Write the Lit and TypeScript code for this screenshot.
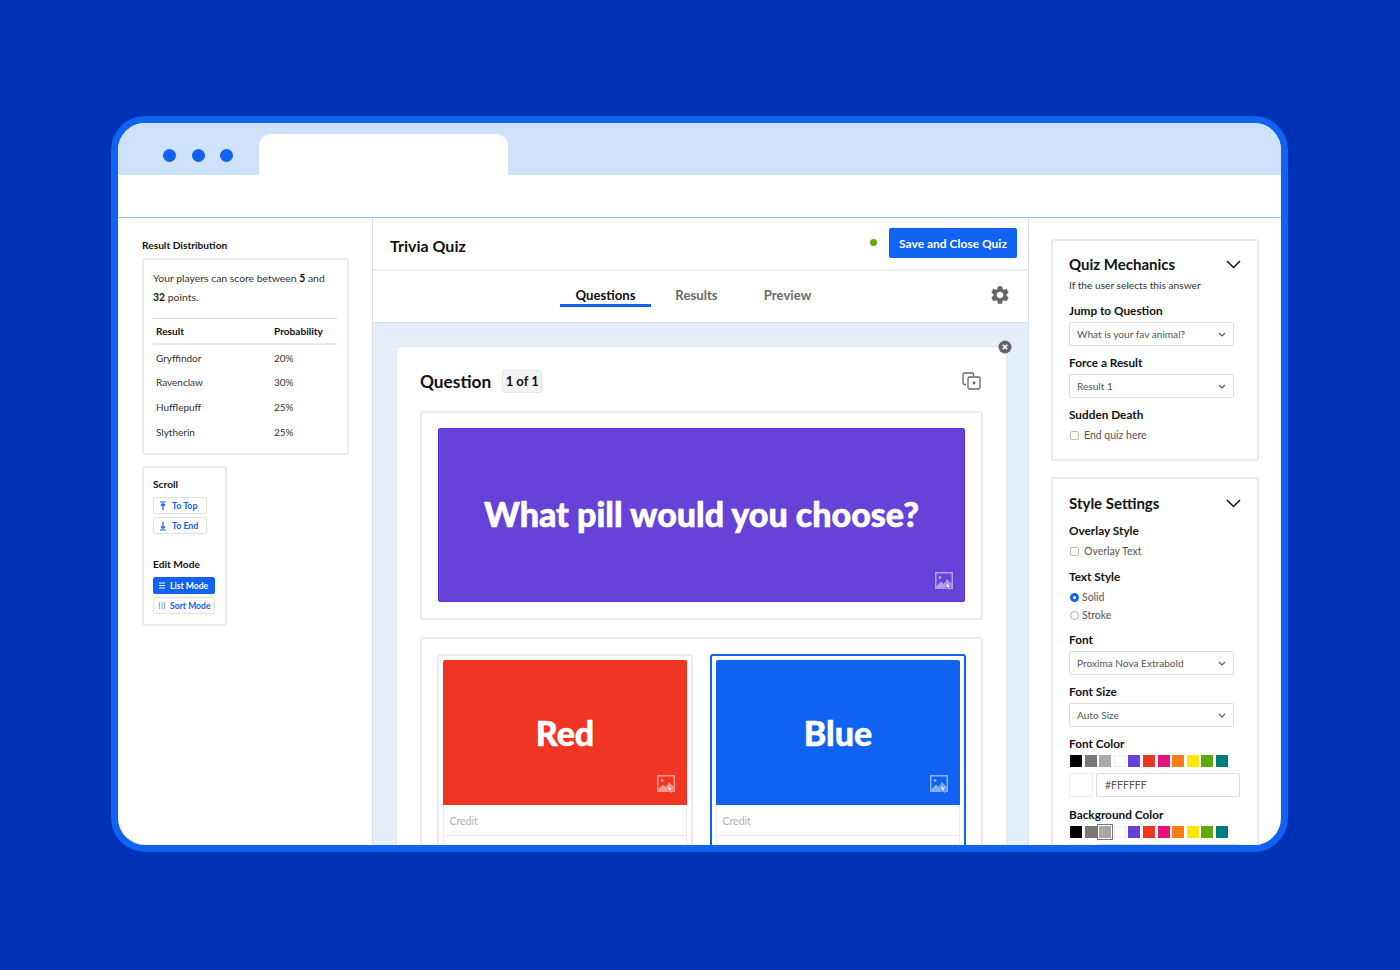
import { LitElement, html, css, svg } from "lit";
import { customElement } from "lit/decorators.js";

const COLORS = ["#000000", "#777777", "#a8a8a8", "#ffffff", "#6642d8", "#f03522", "#e5127e", "#f97d16", "#ffe600", "#5fa80e", "#007c7c"];
const ROWS = [
  ["Gryffindor", "20%"],
  ["Ravenclaw", "30%"],
  ["Hufflepuff", "25%"],
  ["Slytherin", "25%"],
];

const chevron = svg`<path d="M1 1l6.5 6.5L14 1" fill="none" stroke="#111" stroke-width="1.5"/>`;
const smallChevron = svg`<path d="M1 1l3 3 3-3" fill="none" stroke="#555" stroke-width="1.1"/>`;

const imageIcon = (bg: string) => html`<svg class="img-icon" viewBox="0 0 18 18" width="18" height="18">
  <g opacity="0.5">
    <rect x=".75" y=".75" width="16.5" height="15.5" fill="none" stroke="#fff" stroke-width="1.5"/>
    <circle cx="5" cy="5.5" r="1.4" fill="#fff"/>
    <path d="M1.5 14l4.5-4.5 2.5 2.5 3.5-5 4.5 5v4H1.5z" fill="#fff"/>
  </g>
  <path d="M11 9.5l5 5.5h-2l1.5 3H14l-1.500-3-1.500 1.500z" fill="#fff" fill-opacity=".75" stroke="${bg}" stroke-width=".6"/>
</svg>`;

@customElement("app-root")
class AppRoot extends LitElement {
  static styles = css`
    :host {
      display: block;
      height: 970px;
      overflow: hidden;
      background: #0032b6;
      font-family: Lato, "Liberation Sans", sans-serif;
      color: #111;
      --blue: #1062f0;
      --line: #ebebeb;
    }
    * {
      box-sizing: border-box;
    }
    .window {
      position: relative;
      margin: 116px 0 0 111px;
      width: 1177px;
      height: 736px;
      border: 7px solid var(--blue);
      border-radius: 34px;
      background: #fff;
      overflow: hidden;
    }
    .titlebar {
      height: 52px;
      background: #cfe2fc;
      display: flex;
      align-items: flex-end;
      padding-left: 45px;
    }
    .dots {
      display: flex;
      gap: 15.5px;
      margin: 0 26px 13px 0;
    }
    .dots i {
      width: 13px;
      height: 13px;
      border-radius: 50%;
      background: var(--blue);
    }
    .tab {
      width: 249px;
      height: 41px;
      background: #fff;
      border-radius: 12px 12px 0 0;
    }
    .urlbar {
      height: 43px;
      border-bottom: 1px solid #9dbdf0;
    }
    .body {
      display: grid;
      grid-template-columns: 255px 656px 252px;
      height: 627px;
      overflow: hidden;
    }

    /* left column */
    .left {
      border-right: 1px solid #dedede;
      padding: 21px 0 0 24px;
    }
    .card {
      border: 2px solid var(--line);
      border-radius: 3px;
      background: #fff;
    }
    .h-small {
      font-size: 10.2px;
      font-weight: 700;
      line-height: 13px;
    }
    .dist {
      width: 207px;
      height: 197px;
      margin-top: 6px;
      padding: 9px 10px 0 9px;
    }
    .dist p {
      margin: 0;
      font-size: 10.4px;
      line-height: 19px;
      color: #333;
    }
    .dist b {
      color: #111;
    }
    table {
      width: 100%;
      margin-top: 11px;
      border-collapse: collapse;
      font-size: 10px;
      color: #333;
    }
    th {
      text-align: left;
      font-size: 10.1px;
      font-weight: 700;
      color: #111;
      height: 25px;
      border-top: 1px solid #d8d8d8;
      border-bottom: 2px solid var(--line);
    }
    td {
      height: 25px;
      padding-top: 3px;
    }
    th:first-child,
    td:first-child {
      width: 120px;
      padding-left: 3px;
    }
    .tools {
      width: 85px;
      height: 160px;
      margin-top: 11px;
      padding: 10px 0 0 9px;
    }
    .tools .h-small + .btn {
      margin-top: 6px;
    }
    .btn {
      display: flex;
      align-items: center;
      width: 54px;
      height: 17px;
      margin-bottom: 3px;
      border: 1px solid #e2e2e2;
      border-radius: 2px;
      color: var(--blue);
      font-size: 8.8px;
      font-weight: 700;
      gap: 5px;
      padding-left: 5px;
    }
    .btn.wide {
      width: 62px;
      gap: 4px;
      padding-left: 4px;
      font-size: 8.6px;
      white-space: nowrap;
    }
    .btn.active {
      background: var(--blue);
      border-color: var(--blue);
      color: #fff;
    }
    .tools .mode {
      margin-top: 24px;
    }

    /* center column */
    .center {
      border-right: 1px solid #dedede;
      display: flex;
      flex-direction: column;
      min-width: 0;
    }
    .head {
      height: 53px;
      flex: none;
      display: flex;
      align-items: center;
      padding: 0 11px 3px 17px;
      border-bottom: 2px solid #eeeeee;
    }
    .head h1 {
      flex: 1;
      margin: 7px 0 0;
      font-size: 16px;
      font-weight: 700;
    }
    .status {
      width: 7px;
      height: 7px;
      border-radius: 50%;
      background: #5fa80e;
      margin: 0 12px 0 0;
    }
    .save {
      width: 128px;
      height: 30px;
      border: none;
      border-radius: 2px;
      background: var(--blue);
      color: #fff;
      font: 700 12px Lato, "Liberation Sans", sans-serif;
      padding: 0;
      margin-top: 2px;
    }
    .tabs {
      height: 52px;
      flex: none;
      display: flex;
      align-items: center;
      padding: 0 0 5px 187px;
      border-bottom: 1px solid #dddddd;
      font-size: 13.2px;
      font-weight: 700;
      color: #6a6a6a;
    }
    .tabs span {
      display: flex;
      align-items: center;
      justify-content: center;
      height: 26px;
      width: 91px;
      padding-top: 2px;
    }
    .tabs .on {
      color: #111;
      border-bottom: 3px solid var(--blue);
      padding-top: 4px;
    }
    .gear {
      margin-left: auto;
      margin-right: 17px;
      margin-top: 2px;
    }
    .canvas {
      flex: 1;
      min-height: 0;
      background: #e5effb;
      padding: 23px 22px 0 24px;
      overflow: hidden;
    }
    .question {
      position: relative;
      background: #fff;
      height: 600px;
      border-top: 1px solid #dfe3ea;
      border-radius: 2px 2px 0 0;
      padding: 0 23px;
      box-shadow: 1px 0 0 #e3e6ea, -1px 0 0 #e3e6ea;
    }
    .close {
      position: absolute;
      top: -7px;
      right: -6px;
    }
    .q-head {
      display: flex;
      align-items: center;
      height: 64px;
      padding-top: 4px;
      gap: 11px;
    }
    .q-head h2 {
      margin: 0;
      font-size: 17.3px;
      font-weight: 700;
    }
    .badge {
      width: 40px;
      height: 23px;
      display: flex;
      align-items: center;
      justify-content: center;
      background: #f3f3f3;
      border: 1px solid #e3e3e3;
      border-radius: 3px;
      font-size: 13px;
      font-weight: 700;
    }
    .copy {
      margin-left: auto;
      margin-right: 2px;
    }
    .panel {
      border: 2px solid var(--line);
      border-radius: 3px;
      padding: 15px 16px 16px;
    }
    .hero {
      position: relative;
      height: 174px;
      background: #6642d8;
      border: 1px solid #5a30e0;
      border-radius: 2px;
      color: #fff;
      display: flex;
      align-items: center;
      justify-content: center;
      padding-bottom: 4px;
      font-size: 34px;
      font-weight: 900;
      -webkit-text-stroke: 0.6px #fff;
    }
    .img-icon {
      position: absolute;
      right: 11px;
      bottom: 11px;
    }
    .answers {
      margin-top: 17px;
      padding: 15px;
      display: grid;
      grid-template-columns: 256px 256px;
      gap: 17px;
      height: 300px;
    }
    .answer {
      border: 2px solid var(--line);
      border-radius: 3px;
      padding: 4px 4px 0;
      height: 260px;
    }
    .answer.sel {
      border-color: var(--blue);
    }
    .tile {
      position: relative;
      height: 145px;
      color: #fff;
      display: flex;
      align-items: center;
      justify-content: center;
      font-size: 34px;
      font-weight: 900;
      border-radius: 2px 2px 0 0;
      -webkit-text-stroke: 0.5px #fff;
    }
    .tile .img-icon {
      right: 12px;
      bottom: 12px;
    }
    .credit {
      height: 31px;
      border: 1px solid var(--line);
      border-top: none;
      color: #b0b0b0;
      font-size: 10.5px;
      padding: 10px 0 0 5.5px;
    }
    .rest {
      height: 40px;
      border: 1px solid var(--line);
      border-top: none;
    }

    /* right column */
    .right {
      padding: 21px 0 0 22px;
    }
    .box {
      width: 208px;
      padding: 0 0 0 16px;
    }
    .mech {
      height: 222px;
      padding-top: 13px;
    }
    .style {
      height: 400px;
      margin-top: 16px;
      padding-top: 14px;
    }
    .box-title {
      display: flex;
      align-items: center;
      justify-content: space-between;
      width: 172px;
      font-size: 15px;
      font-weight: 700;
      line-height: 20px;
    }
    .sub {
      font-size: 10.2px;
      line-height: 13px;
      margin-top: 5px;
      color: #333;
    }
    .lbl {
      font-size: 11.8px;
      font-weight: 700;
      line-height: 14px;
      color: #111;
      margin-top: 10px;
    }
    .lbl.sec {
      margin-top: 11px;
    }
    .lbl.jump {
      margin-top: 12px;
    }
    .lbl.wide {
      margin-top: 13px;
    }
    .lbl.font {
      margin-top: 12px;
    }
    .select {
      width: 165px;
      height: 24px;
      margin-top: 4px;
      border: 1px solid #dcdcdc;
      border-radius: 2px;
      display: flex;
      align-items: center;
      justify-content: space-between;
      padding: 0 7px;
      font-size: 10.1px;
      color: #555;
    }
    .check {
      display: flex;
      align-items: center;
      gap: 5px;
      margin-top: 7px;
      font-size: 10.5px;
      color: #555;
      height: 12px;
    }
    .check i {
      width: 9px;
      height: 9px;
      margin-left: 1px;
      border: 1px solid #bbb;
      border-radius: 2px;
    }
    .radio {
      display: flex;
      align-items: center;
      gap: 3px;
      margin-top: 6px;
      font-size: 10.5px;
      color: #555;
      height: 12px;
      margin-left: 1px;
    }
    .radio.first {
      margin-top: 7px;
    }
    .radio i {
      width: 9px;
      height: 9px;
      border: 1px solid #aaa;
      border-radius: 50%;
    }
    .radio i.on {
      border: 3px solid var(--blue);
    }
    .swatches {
      display: flex;
      gap: 2.6px;
      margin: 4px 0 0 1px;
    }
    .swatches i {
      width: 12px;
      height: 12px;
    }
    .swatches i.light {
      border: 1px solid #eee;
    }
    .swatches i.picked {
      outline: 1px solid #777;
      outline-offset: 1px;
    }
    .color-row {
      display: flex;
      gap: 3px;
      margin-top: 6px;
    }
    .color-row i {
      width: 24px;
      height: 24px;
      border: 1px solid #eeeeee;
    }
    .color-row div {
      width: 144px;
      height: 24px;
      border: 1px solid #dcdcdc;
      border-radius: 2px;
      font-size: 10.5px;
      color: #555;
      padding: 5px 0 0 8px;
    }
  `;

  private select(text: string) {
    return html`<div class="select">
      <span>${text}</span>
      <svg width="8" height="5" viewBox="0 0 8 5">${smallChevron}</svg>
    </div>`;
  }

  private swatches(picked = -1) {
    return html`<div class="swatches">
      ${COLORS.map(
        (c, i) =>
          html`<i
            class="${c === "#ffffff" ? "light" : ""} ${i === picked ? "picked" : ""}"
            style="background:${c}"
          ></i>`,
      )}
    </div>`;
  }

  private renderLeft() {
    return html`<aside class="left">
      <div class="h-small">Result Distribution</div>
      <div class="card dist">
        <p>Your players can score between <b>5</b> and<br /><b>32</b> points.</p>
        <table>
          <tr><th>Result</th><th>Probability</th></tr>
          ${ROWS.map((r) => html`<tr><td>${r[0]}</td><td>${r[1]}</td></tr>`)}
        </table>
      </div>
      <div class="card tools">
        <div class="h-small">Scroll</div>
        <div class="btn">
          <svg width="8" height="10" viewBox="0 0 8 10"><path d="M1 1h6M4 9V2.500M2 4.500L4 2.500l2 2" fill="none" stroke="currentColor" stroke-width="1.200"/></svg>
          To Top
        </div>
        <div class="btn">
          <svg width="8" height="10" viewBox="0 0 8 10"><path d="M1 9h6M4 1v6.500M2 5.500L4 7.500l2-2" fill="none" stroke="currentColor" stroke-width="1.200"/></svg>
          To End
        </div>
        <div class="h-small mode">Edit Mode</div>
        <div class="btn wide active">
          <svg width="8" height="7" viewBox="0 0 8 7"><path d="M1 1h6M1 3.500h6M1 6h6" stroke="#fff" stroke-width="1.100"/></svg>
          List Mode
        </div>
        <div class="btn wide">
          <svg width="8" height="7" viewBox="0 0 8 7"><path d="M1.500 0v7M4 0v7M6.500 0v7" stroke="#8fb4f5" stroke-width="1.200"/></svg>
          Sort Mode
        </div>
      </div>
    </aside>`;
  }

  private renderCenter() {
    return html`<main class="center">
      <div class="head">
        <h1>Trivia Quiz</h1>
        <i class="status"></i>
        <button class="save">Save and Close Quiz</button>
      </div>
      <div class="tabs">
        <span class="on">Questions</span>
        <span>Results</span>
        <span>Preview</span>
        <svg class="gear" width="22" height="22" viewBox="0 0 24 24"><path fill="#666" d="M19.140 12.940c.04-.3.06-.61.06-.94 0-.32-.02-.64-.07-.94l2.030-1.580c.18-.14.23-.41.12-.61l-1.920-3.320c-.12-.22-.37-.29-.59-.22l-2.390.96c-.5-.38-1.030-.7-1.620-.94l-.36-2.540c-.04-.24-.24-.41-.48-.41h-3.840c-.24 0-.43.17-.47.41l-.36 2.540c-.59.24-1.130.57-1.620.94l-2.390-.96c-.22-.08-.47 0-.59.22L2.740 8.870c-.12.21-.08.47.12.61l2.030 1.580c-.05.3-.09.63-.09.94s.02.64.07.94l-2.030 1.580c-.18.14-.23.41-.12.61l1.920 3.320c.12.22.37.29.59.22l2.390-.96c.5.38 1.030.7 1.620.94l.36 2.540c.05.24.24.41.48.41h3.840c.24 0 .44-.17.47-.41l.36-2.540c.59-.24 1.130-.56 1.620-.94l2.390.96c.22.08.47 0 .59-.22l1.920-3.320c.12-.22.07-.47-.12-.61l-2.010-1.580zM12 15.600c-1.980 0-3.600-1.620-3.600-3.600s1.620-3.600 3.600-3.600 3.600 1.620 3.600 3.600-1.620 3.600-3.600 3.600z"/></svg>
      </div>
      <div class="canvas">
        <div class="question">
          <svg class="close" width="14" height="14" viewBox="0 0 14 14"><circle cx="7" cy="7" r="6.500" fill="#666"/><path d="M4.700 4.700l4.600 4.600M9.300 4.700l-4.600 4.600" stroke="#fff" stroke-width="1.600"/></svg>
          <div class="q-head">
            <h2>Question</h2>
            <span class="badge">1 of 1</span>
            <svg class="copy" width="19" height="18" viewBox="0 0 19 18" fill="none" stroke="#666" stroke-width="1.300"><path d="M4 12.500H2.500a1.500 1.500 0 0 1-1.500-1.500V2.500A1.500 1.500 0 0 1 2.500 1H10a1.500 1.500 0 0 1 1.500 1.500V4"/><rect x="6" y="5" width="12" height="12" rx="1.500"/><circle cx="12" cy="11" r=".8" fill="#666"/></svg>
          </div>
          <div class="panel">
            <div class="hero">What pill would you choose?${imageIcon("#6642d8")}</div>
          </div>
          <div class="panel answers">
            <div class="answer">
              <div class="tile" style="background:#f03522">Red${imageIcon("#f03522")}</div>
              <div class="credit">Credit</div>
              <div class="rest"></div>
            </div>
            <div class="answer sel">
              <div class="tile" style="background:#1062f0">Blue${imageIcon("#1062f0")}</div>
              <div class="credit">Credit</div>
              <div class="rest"></div>
            </div>
          </div>
        </div>
      </div>
    </main>`;
  }

  private renderRight() {
    return html`<aside class="right">
      <div class="card box mech">
        <div class="box-title">Quiz Mechanics <svg width="15" height="9" viewBox="0 0 15 9">${chevron}</svg></div>
        <div class="sub">If the user selects this answer</div>
        <div class="lbl jump">Jump to Question</div>
        ${this.select("What is your fav animal?")}
        <div class="lbl">Force a Result</div>
        ${this.select("Result 1")}
        <div class="lbl">Sudden Death</div>
        <div class="check"><i></i>End quiz here</div>
      </div>
      <div class="card box style">
        <div class="box-title">Style Settings <svg width="15" height="9" viewBox="0 0 15 9">${chevron}</svg></div>
        <div class="lbl sec">Overlay Style</div>
        <div class="check"><i></i>Overlay Text</div>
        <div class="lbl wide">Text Style</div>
        <div class="radio first"><i class="on"></i>Solid</div>
        <div class="radio"><i></i>Stroke</div>
        <div class="lbl font">Font</div>
        ${this.select("Proxima Nova Extrabold")}
        <div class="lbl">Font Size</div>
        ${this.select("Auto Size")}
        <div class="lbl">Font Color</div>
        ${this.swatches()}
        <div class="color-row"><i></i><div>#FFFFFF</div></div>
        <div class="lbl sec">Background Color</div>
        ${this.swatches(2)}
        <div class="color-row"><i style="background:#a8a8a8"></i><div></div></div>
      </div>
    </aside>`;
  }

  render() {
    return html`<div class="window">
      <div class="titlebar">
        <div class="dots"><i></i><i></i><i></i></div>
        <div class="tab"></div>
      </div>
      <div class="urlbar"></div>
      <div class="body">${this.renderLeft()} ${this.renderCenter()} ${this.renderRight()}</div>
    </div>`;
  }
}
